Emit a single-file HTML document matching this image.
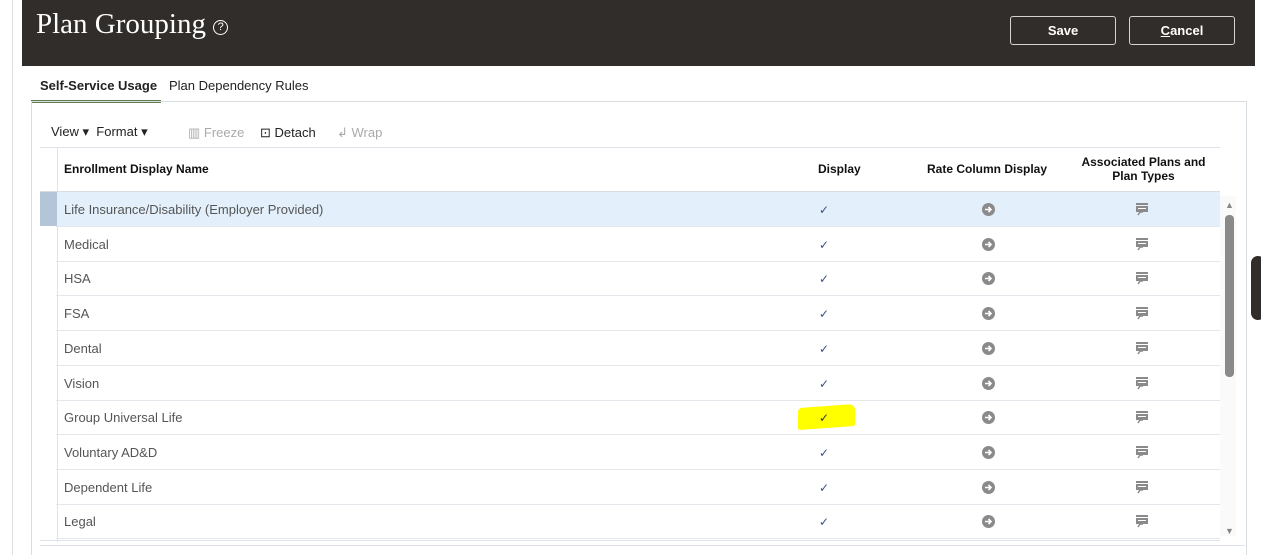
<!DOCTYPE html>
<html><head><style>
*{margin:0;padding:0;box-sizing:border-box}
html,body{width:1261px;height:555px;overflow:hidden}
body{background:#fff;font-family:"Liberation Sans",Arial,sans-serif;position:relative}
.a{position:absolute}
.hdr{left:22px;top:0;width:1233px;height:66px;background:#312d2a}
.title{left:36px;top:8px;font-family:"Liberation Serif",serif;font-size:29px;color:#fff}
.btn{top:16px;height:29px;border:1px solid #d6d2ce;border-radius:3px;color:#fff;font-size:13px;font-weight:bold;text-align:center;line-height:27px}
.row{left:56px;width:1164px;border-bottom:1px solid #e4e8ec;height:35px}
.nm{left:64px;font-size:13px;color:#555}
.chk{left:819px;font-size:12px;color:#3a4f8a}
.ri{left:982px;width:13px;height:13px;border-radius:50%;background:#8a8a8a}
</style></head><body>
<div class="a" style="left:12px;top:0;width:1px;height:555px;background:#e0e0e0"></div>
<div class="a hdr"></div>
<div class="a title">Plan Grouping <span style="display:inline-block;width:15px;height:15px;border:1.5px solid #fff;border-radius:50%;font-size:11px;text-align:center;line-height:12px;font-family:'Liberation Sans';vertical-align:3px">?</span></div>
<div class="a btn" style="left:1010px;width:106px">Save</div>
<div class="a btn" style="left:1129px;width:106px"><u>C</u>ancel</div>
<div class="a" style="left:40px;top:78px;font-size:13px;font-weight:bold;color:#222">Self-Service Usage</div>
<div class="a" style="left:169px;top:78px;font-size:13px;color:#222">Plan Dependency Rules</div>
<div class="a" style="left:31px;top:100px;width:130px;height:3px;background:#5f7d4f"></div>
<div class="a" style="left:31px;top:101px;width:1216px;height:460px;border:1px solid #d8dde2"></div>
<div class="a" style="left:51px;top:124px;font-size:13px;color:#222">View ▾ &nbsp;Format ▾</div>
<div class="a" style="left:188px;top:125px;font-size:13px;color:#aaa">▥ Freeze</div>
<div class="a" style="left:260px;top:125px;font-size:13px;color:#222">⊡ Detach</div>
<div class="a" style="left:337px;top:125px;font-size:13px;color:#aaa">↲ Wrap</div>
<div class="a" style="left:40px;top:147px;width:1180px;height:1px;background:#dde3e8"></div>
<div class="a" style="left:57px;top:147px;width:1px;height:395px;background:#dde3e8"></div>
<div class="a" style="left:64px;top:162px;font-size:12px;font-weight:bold;color:#111">Enrollment Display Name</div>
<div class="a" style="left:818px;top:162px;font-size:12px;font-weight:bold;color:#111">Display</div>
<div class="a" style="left:927px;top:162px;font-size:12px;font-weight:bold;color:#111">Rate Column Display</div>
<div class="a" style="left:1075px;top:155px;width:137px;text-align:center;font-size:12px;font-weight:bold;color:#111;line-height:14px">Associated Plans and Plan Types</div>
<div class="a" style="left:40px;top:191px;width:1180px;height:1px;background:#d8dde2"></div>
<div class="a" style="left:40px;top:192px;width:17px;height:34px;background:#b3c5d6"></div>
<div class="a" style="left:57px;top:192px;width:1163px;height:34px;background:#e3f0fc"></div>
<div class="a" style="left:798px;top:406px;width:57px;height:22px;background:#ffff00;border-radius:4px 6px 2px 2px;transform:skewY(-4deg)"></div>
<div class="a" style="left:1220px;top:196px;width:16px;height:340px;background:#fafafa"></div>
<div class="a" style="left:1225px;top:200px;font-size:9px;color:#888">▲</div>
<div class="a" style="left:1225px;top:526px;font-size:9px;color:#888">▼</div>
<div class="a" style="left:1225px;top:215px;width:9px;height:162px;background:#8a8a8a;border-radius:4px"></div>
<div class="a" style="left:1251px;top:256px;width:14px;height:64px;background:#312d2a;border-radius:8px"></div>
<div class="a" style="left:40px;top:540px;width:1180px;height:1px;background:#dde3e8"></div>
<div class="a" style="left:40px;top:545px;width:1205px;height:1px;background:#dde3e8"></div>
<div id="rows"></div>
<script>
var n=["Life Insurance/Disability (Employer Provided)","Medical","HSA","FSA","Dental","Vision","Group Universal Life","Voluntary AD&amp;D","Dependent Life","Legal"];
var h="";
for(var i=0;i<n.length;i++){var t=192+i*34.7;
h+='<div class="a row" style="top:'+t+'px"></div>';
h+='<div class="a nm" style="top:'+(t+10)+'px">'+n[i]+'</div>';
h+='<div class="a chk" style="top:'+(t+11)+'px;'+(i==6?'color:#333':'')+'">✓</div>';
h+='<div class="a ri" style="top:'+(t+11)+'px"><svg width="13" height="13" viewBox="0 0 13 13"><path d="M3 6.5h6M6.5 4l2.5 2.5-2.5 2.5" stroke="#fff" stroke-width="1.6" fill="none"/></svg></div>';
h+='<svg class="a" style="left:1135px;top:'+(t+11)+'px" width="14" height="13" viewBox="0 0 14 13"><rect x="1" y="0" width="12" height="2" fill="#8a8a8a"/><rect x="1" y="3" width="12" height="6" fill="#8a8a8a"/><path d="M3 12l2-3h3" stroke="#8a8a8a" stroke-width="1.5" fill="none"/><rect x="3" y="5" width="8" height="1" fill="#fff"/></svg>';}
document.getElementById("rows").innerHTML=h;
</script>
</body></html>
